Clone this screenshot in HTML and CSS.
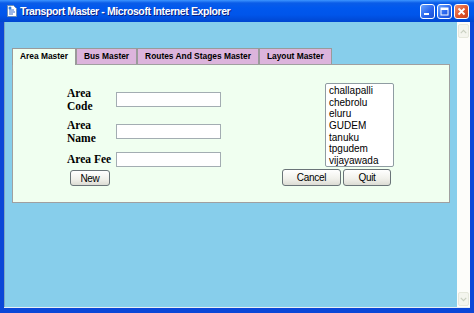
FILE: index.html
```html
<!DOCTYPE html>
<html lang="en">
<head>
    <meta charset="UTF-8">
    <title>Transport Master</title>
    <link rel="stylesheet" href="styles.css">
</head>
<body>
    <div class="window">
        <div class="titlebar">
            <svg class="app-icon" viewBox="0 0 12 12">
                <path d="M1.5 0.5h6l3 3v8h-9z" fill="#fff" stroke="#6d8fb8"/>
                <path d="M3 5h5M3 7h6M3 9h4" stroke="#3a6fd0"/>
                <circle cx="4" cy="3" r="1.5" fill="#2f7fe0"/>
            </svg>
            <span class="title">Transport Master - Microsoft Internet Explorer</span>
            <div class="controls">
                <span class="ctl">
                    <svg viewBox="0 0 13 13"><rect x="3" y="8" width="5" height="2" fill="#fff"/></svg>
                </span>
                <span class="ctl">
                    <svg viewBox="0 0 13 13"><rect x="3" y="3" width="7" height="7" fill="none" stroke="#fff"/><rect x="3" y="3" width="7" height="2" fill="#fff"/></svg>
                </span>
                <span class="ctl ctl-close">
                    <svg viewBox="0 0 13 13"><path d="M3.5 3.5l6 6M9.5 3.5l-6 6" stroke="#fff" stroke-width="1.8"/></svg>
                </span>
            </div>
        </div>

        <div class="frame">
            <div class="viewport">
                <div class="tabs">
                    <div class="tab active">Area Master</div>
                    <div class="tab">Bus Master</div>
                    <div class="tab">Routes And Stages Master</div>
                    <div class="tab">Layout Master</div>
                </div>

                <div class="panel">
                    <div class="left">
                        <div class="fields">
                            <label for="code">Area Code</label>
                            <input type="text" id="code">
                            <label for="aname">Area Name</label>
                            <input type="text" id="aname">
                            <label for="fee">Area Fee</label>
                            <input type="text" id="fee">
                        </div>
                        <button class="btn btn-new">New</button>
                    </div>

                    <div class="right">
                        <select class="area-list" multiple size="7">
                            <option>challapalli</option>
                            <option>chebrolu</option>
                            <option>eluru</option>
                            <option>GUDEM</option>
                            <option>tanuku</option>
                            <option>tpgudem</option>
                            <option>vijayawada</option>
                        </select>
                        <div class="btn-row">
                            <button class="btn btn-cancel">Cancel</button>
                            <button class="btn btn-quit">Quit</button>
                        </div>
                    </div>
                </div>
            </div>

            <div class="scrollbar">
                <span class="sb-btn">
                    <svg viewBox="0 0 9 6"><path d="M1 5l3.5-3.5L8 5" fill="none" stroke="#c9cfc0" stroke-width="1.5"/></svg>
                </span>
                <span class="sb-btn">
                    <svg viewBox="0 0 9 6"><path d="M1 1l3.5 3.5L8 1" fill="none" stroke="#c9cfc0" stroke-width="1.5"/></svg>
                </span>
            </div>
        </div>
    </div>
</body>
</html>
```

FILE: styles.css
```css
body {
    margin: 0;
    font-family: "Liberation Sans", Arial, sans-serif;
}
.window {
    width: 474px;
    height: 313px;
    background-color: #0a47d8;
    display: flex;
    flex-direction: column;
    overflow: hidden;
}

/* title bar */
.titlebar {
    height: 22px;
    flex: none;
    display: flex;
    align-items: center;
    padding: 0 5px 0 6px;
    background: linear-gradient(#3d95ff 0, #0a5ce8 3px, #0058ee 8px, #0055ea 15px, #0046d0 22px);
}
.app-icon {
    width: 12px;
    height: 12px;
    margin-right: 2px;
}
.title {
    color: #fff;
    font-weight: bold;
    font-size: 10.5px;
    letter-spacing: -0.4px;
    text-shadow: 1px 1px #0a1f80;
}
.controls {
    margin-left: auto;
    display: flex;
    gap: 2px;
}
.ctl {
    width: 15px;
    height: 15px;
    box-sizing: border-box;
    border: 1px solid #fff;
    border-radius: 3px;
    background: linear-gradient(135deg, #6aa4ff, #2a66ee 55%, #1b4fd2);
}
.ctl svg {
    display: block;
    width: 13px;
    height: 13px;
}
.ctl-close {
    background: linear-gradient(135deg, #f09070, #e0562c 55%, #c8401c);
}

/* page area */
.frame {
    flex: 1;
    display: flex;
    margin: 0 4px 5px 4px;
    border-bottom: 1px solid #e8eef4;
}
.viewport {
    flex: 1;
    background-color: #87ceeb;
    border-left: 1px solid #7ba7c4;
    padding: 26px 7px 0 7px;
}
.scrollbar {
    width: 13px;
    background-color: #fdfdfa;
    display: flex;
    flex-direction: column;
    justify-content: space-between;
    padding: 2px 0 1px;
}
.sb-btn {
    height: 12px;
    margin: 0 1px;
    border: 1px solid #e6e8dc;
    border-radius: 2px;
    background-color: #f4f5ee;
    display: flex;
    align-items: center;
    justify-content: center;
}
.sb-btn svg {
    width: 7px;
    height: 5px;
}

/* tabs */
.tabs {
    display: flex;
    align-items: flex-end;
}
.tab {
    height: 16px;
    box-sizing: border-box;
    padding: 0 7px;
    border: 1px solid #9a9a9a;
    border-bottom: 0;
    background-color: #dcb4dc;
    font-weight: bold;
    font-size: 8.4px;
    line-height: 15px;
    white-space: nowrap;
}
.tab.active {
    height: 17px;
    margin-bottom: -1px;
    background-color: #f0fff0;
    position: relative;
}

.panel {
    background-color: #f0fff0;
    border: 1px solid #a0a0a0;
    padding: 18px 55px 16px 53px;
    display: flex;
    justify-content: space-between;
}
.left {
    display: flex;
    flex-direction: column;
    align-items: flex-start;
}
.fields {
    display: grid;
    grid-template-columns: 46px 105px;
    grid-template-rows: 25px 25px 16px;
    column-gap: 4px;
    row-gap: 7px;
    align-items: center;
    margin-top: 4px;
}
.fields label {
    font-family: "Liberation Serif", "Times New Roman", serif;
    font-weight: bold;
    font-size: 11.5px;
    line-height: 12.5px;
    padding-left: 1px;
}
.fields input {
    width: 105px;
    height: 15px;
    box-sizing: border-box;
    border: 1px solid #a3adb2;
    padding: 0 2px;
    font-size: 10px;
}

.right {
    width: 112px;
    display: flex;
    flex-direction: column;
    align-items: flex-end;
}
.area-list {
    width: 69px;
    height: 84px;
    box-sizing: border-box;
    border: 1px solid #8f9ca2;
    padding: 1px 0 0 1px;
    overflow: hidden;
    font-family: "Liberation Sans", Arial, sans-serif;
    font-size: 10px;
    color: #000;
}
.area-list option {
    padding: 0 2px;
    min-height: 0;
    height: 11.7px;
    line-height: 11.7px;
}
.btn-row {
    display: flex;
    gap: 2px;
    margin: 2px 3px 0 0;
}

.btn {
    height: 17px;
    box-sizing: border-box;
    border: 1px solid #6a7478;
    border-radius: 3px;
    background: linear-gradient(#ffffff, #f0f0ea 60%, #dcdcd4);
    font-family: "Liberation Sans", Arial, sans-serif;
    font-size: 10px;
    letter-spacing: -0.3px;
    padding: 0;
    color: #000;
}
.btn-new {
    width: 40px;
    height: 16px;
    margin: 3px 0 0 4px;
}
.btn-cancel {
    width: 59px;
}
.btn-quit {
    width: 48px;
}
```
